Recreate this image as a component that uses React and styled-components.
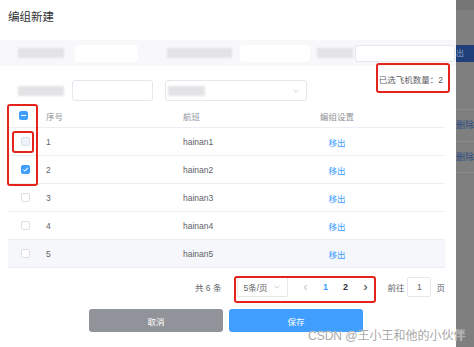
import React from 'react';
import styled, { createGlobalStyle } from 'styled-components';

const GlobalStyle = createGlobalStyle`
  html, body {
    margin: 0;
    padding: 0;
    background: #fff;
  }
  body {
    font-family: "Liberation Sans", "Noto Sans CJK SC", sans-serif;
    color: #606266;
  }
`;

const Page = styled.div`
  position: relative;
  display: flex;
  width: 474px;
  height: 347px;
  overflow: hidden;
`;

const Dialog = styled.div`
  width: 463px;
  height: 100%;
  background: #fff;
  display: flex;
  flex-direction: column;
`;

const Title = styled.div`
  height: 34px;
  line-height: 34px;
  padding-left: 8px;
  font-size: 11.5px;
  color: #303133;
`;

const FormBand = styled.div`
  margin-top: 6px;
  height: 26px;
  display: flex;
  align-items: center;
  background: #f8f8fa;
`;

const FormRow = styled.div`
  margin-top: 14px;
  height: 21px;
  display: flex;
  align-items: center;
`;

// redacted label / value in the screenshot
const Blur = styled.div`
  margin-left: ${p => p.$ml || 0}px;
  width: ${p => p.$w}px;
  height: 10px;
  background: #e3e3e6;
  filter: blur(1px);
  flex-shrink: 0;
`;

const Field = styled.div`
  position: relative;
  margin-left: ${p => p.$ml || 0}px;
  width: ${p => p.$w}px;
  height: ${p => p.$h || 21}px;
  box-sizing: border-box;
  background: #fff;
  border: 1px solid ${p => (p.$plain ? '#fff' : '#e4e7ed')};
  border-radius: 3px;
  display: flex;
  align-items: center;
  flex-shrink: 0;
`;

const Chevron = styled.svg`
  position: absolute;
  right: 6px;
  top: 50%;
  margin-top: -4px;
  width: 8px;
  height: 8px;
`;

const Count = styled.div`
  position: relative;
  margin-left: auto;
  margin-right: 6px;
  align-self: flex-start;
  margin-top: -17px;
  height: 30px;
  box-sizing: border-box;
  padding: 10px 5px 0 1px;
  border: 2px solid #e5231d;
  border-radius: 3px;
  font-size: 8.5px;
  line-height: 11px;
  color: #606266;
  white-space: nowrap;
`;

const Table = styled.div`
  position: relative;
  margin: 3px 11px 0 8px;
`;

const Row = styled.div`
  display: grid;
  grid-template-columns: 30px 137px 110px 104px 1fr;
  align-items: center;
  height: ${p => (p.$head ? 23 : 27)}px;
  border-bottom: 1px solid #ebeef5;
  background: ${p => (p.$hover ? '#f5f7fa' : '#fff')};
  font-size: 8.5px;
  color: ${p => (p.$head ? '#909399' : '#606266')};
`;

const Cell = styled.div`
  padding-left: ${p => (p.$center ? 0 : 8)}px;
  text-align: ${p => (p.$center ? 'center' : 'left')};
  white-space: nowrap;
`;

const BoxCell = styled.div`
  display: flex;
  justify-content: center;
  padding-left: ${p => p.$pl || 0}px;
`;

const Check = styled.span`
  position: relative;
  width: 9px;
  height: 9px;
  box-sizing: border-box;
  border-radius: 2px;
  border: 1px solid ${p => (p.$on ? '#409eff' : '#dcdfe6')};
  background: ${p => (p.$on ? '#409eff' : p.$disabled ? '#edf2fc' : '#fff')};
  display: flex;
  align-items: center;
  justify-content: center;
`;

const Dash = styled.span`
  width: 5px;
  height: 1px;
  background: #fff;
`;

const Link = styled.span`
  color: #409eff;
`;

const Mark = styled.div`
  position: absolute;
  left: ${p => p.$x}px;
  top: ${p => p.$y}px;
  width: ${p => p.$w}px;
  height: ${p => p.$h}px;
  box-sizing: border-box;
  border: 2px solid #e5231d;
  border-radius: 3px;
  pointer-events: none;
`;

const Pager = styled.div`
  margin-top: 9px;
  height: 20px;
  padding-right: 11px;
  display: flex;
  align-items: center;
  justify-content: flex-end;
  font-size: 8.5px;
  color: #606266;
`;

const Total = styled.span`
  margin-right: 15px;
`;

const PagerGroup = styled.div`
  position: relative;
  display: flex;
  align-items: center;
  &::after {
    content: '';
    position: absolute;
    left: -2px;
    right: -1px;
    top: -1px;
    bottom: -6px;
    border: 2px solid #e5231d;
    border-radius: 3px;
  }
`;

const SizeSelect = styled.div`
  position: relative;
  margin-left: 1px;
  width: 51px;
  height: 20px;
  box-sizing: border-box;
  border: 1px solid #e4e7ed;
  border-radius: 2px;
  padding-left: 5px;
  display: flex;
  align-items: center;
`;

const PageBtn = styled.span`
  width: 20px;
  text-align: center;
  font-weight: ${p => (p.$bold ? 700 : 400)};
  color: ${p => (p.$active ? '#409eff' : p.$muted ? '#c0c4cc' : '#303133')};
  font-size: ${p => (p.$arrow ? 12 : 9)}px;
`;

const Jumper = styled.div`
  margin-left: 12px;
  display: flex;
  align-items: center;
`;

const JumpInput = styled.span`
  margin: 0 5px 0 3px;
  width: 24px;
  height: 20px;
  box-sizing: border-box;
  border: 1px solid #e4e7ed;
  border-radius: 2px;
  display: flex;
  align-items: center;
  justify-content: center;
`;

const Footer = styled.div`
  margin-top: 12px;
  display: flex;
  justify-content: center;
  gap: 6px;
  padding-right: 4px;
`;

const Button = styled.button`
  width: 134px;
  height: 23px;
  border: none;
  border-radius: 3px;
  background: ${p => (p.$primary ? '#409eff' : '#909399')};
  color: #fff;
  font-family: inherit;
  font-size: 8.5px;
  padding: 0;
`;

const Backdrop = styled.div`
  flex: 1;
  background: #7f7f7f;
  display: flex;
  flex-direction: column;
`;

const BackTop = styled.div`
  height: 10px;
  background: #767676;
`;

const BackBtn = styled.div`
  margin-top: 35px;
  height: 17px;
  background: #1e3f7a;
  color: #8fa3c4;
  font-size: 8px;
  line-height: 17px;
  overflow: hidden;
`;

const BackLine = styled.div`
  margin-top: ${p => p.$mt}px;
  height: 1px;
  background: #8b8b8b;
`;

const BackLink = styled.div`
  margin-top: ${p => p.$mt}px;
  height: 10px;
  color: #2b4a80;
  font-size: 9px;
  line-height: 10px;
  white-space: nowrap;
  overflow: hidden;
  direction: rtl;
`;

const Watermark = styled.div`
  position: absolute;
  left: 308px;
  top: 326px;
  font-size: 12px;
  color: #a9a9a9;
  text-shadow: 0 0 1px #fff;
  white-space: nowrap;
`;

const ChevronIcon = () => (
  <Chevron viewBox="0 0 10 10">
    <path d="M2 3.5 L5 6.5 L8 3.5" fill="none" stroke="#c0c4cc" strokeWidth="1" />
  </Chevron>
);

const rows = [
  { id: 1, name: 'hainan1', disabled: true },
  { id: 2, name: 'hainan2', checked: true },
  { id: 3, name: 'hainan3' },
  { id: 4, name: 'hainan4' },
  { id: 5, name: 'hainan5', hover: true },
];

const App = () => (
  <Page>
    <GlobalStyle />
    <Dialog>
      <Title>编组新建</Title>
      <FormBand>
        <Blur $ml={18} $w={46} />
        <Field $ml={11} $w={63} $h={17} $plain />
        <Blur $ml={29} $w={65} />
        <Field $ml={8} $w={70} $h={17} $plain />
        <Blur $ml={7} $w={36} />
        <Field $ml={2} $w={100} $h={17} />
      </FormBand>
      <FormRow>
        <Blur $ml={18} $w={46} />
        <Field $ml={8} $w={81} />
        <Field $ml={12} $w={142}>
          <Blur $ml={2} $w={37} />
          <ChevronIcon />
        </Field>
        <Count>已选飞机数量：2</Count>
      </FormRow>
      <Table>
        <Row $head>
          <BoxCell $pl={0}>
            <Check $on>
              <Dash />
            </Check>
          </BoxCell>
          <Cell>序号</Cell>
          <Cell>航班</Cell>
          <Cell $center>编组设置</Cell>
          <Cell />
        </Row>
        {rows.map(r => (
          <Row key={r.id} $hover={r.hover}>
            <BoxCell $pl={4}>
              <Check $on={r.checked} $disabled={r.disabled}>
                {r.checked && (
                  <svg width="7" height="7" viewBox="0 0 8 8">
                    <path d="M1.5 4 L3.3 5.8 L6.6 2.2" fill="none" stroke="#fff" strokeWidth="1.2" />
                  </svg>
                )}
              </Check>
            </BoxCell>
            <Cell>{r.id}</Cell>
            <Cell>{r.name}</Cell>
            <Cell $center>
              <Link>移出</Link>
            </Cell>
            <Cell />
          </Row>
        ))}
        <Mark $x={-1} $y={0} $w={31} $h={82} />
        <Mark $x={4} $y={27} $w={22} $h={22} />
      </Table>
      <Pager>
        <Total>共 6 条</Total>
        <PagerGroup>
          <SizeSelect>
            5条/页
            <ChevronIcon />
          </SizeSelect>
          <PageBtn $arrow $muted style={{ marginLeft: 7 }}>‹</PageBtn>
          <PageBtn $active $bold>1</PageBtn>
          <PageBtn $bold>2</PageBtn>
          <PageBtn $arrow>›</PageBtn>
        </PagerGroup>
        <Jumper>
          前往
          <JumpInput>1</JumpInput>
          页
        </Jumper>
      </Pager>
      <Footer>
        <Button>取消</Button>
        <Button $primary>保存</Button>
      </Footer>
    </Dialog>
    <Backdrop>
      <BackTop />
      <BackBtn>出</BackBtn>
      <BackLine $mt={47} />
      <BackLink $mt={10}>删除</BackLink>
      <BackLine $mt={11} />
      <BackLink $mt={10}>删除</BackLink>
      <BackLine $mt={10} />
    </Backdrop>
    <Watermark>CSDN @王小王和他的小伙伴</Watermark>
  </Page>
);

export default App;
